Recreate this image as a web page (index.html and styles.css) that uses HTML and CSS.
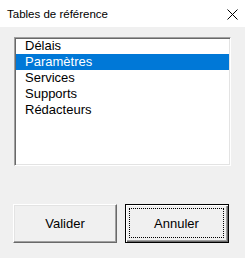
FILE: index.html
```html
<!DOCTYPE html>
<html lang="fr">
<head>
    <meta charset="UTF-8">
    <title>Tables de référence</title>
    <link rel="stylesheet" href="styles.css">
</head>
<body>
    <div class="titlebar">
        <span class="title">Tables de référence</span>
        <svg class="close" width="11" height="11" viewBox="0 0 11 11">
            <path d="M0.5 0.5 L10.5 10.5 M10.5 0.5 L0.5 10.5" stroke="#000" stroke-width="1" fill="none"/>
        </svg>
    </div>
    <div class="client">
        <ul class="listbox">
            <li>Délais</li>
            <li class="selected">Paramètres</li>
            <li>Services</li>
            <li>Supports</li>
            <li>Rédacteurs</li>
        </ul>
        <div class="buttons">
            <button class="btn">Valider</button>
            <button class="btn default"><span class="focus">Annuler</span></button>
        </div>
    </div>
</body>
</html>
```

FILE: styles.css
```css
body {
    margin: 0;
    width: 245px;
    height: 258px;
    background-color: #f0f0f0;
    font-family: "Liberation Sans", Arial, sans-serif;
    overflow: hidden;
}

.titlebar {
    height: 27px;
    background-color: #fff;
    display: flex;
    align-items: center;
    justify-content: space-between;
    padding: 0 7px 0 7px;
}

.title {
    font-size: 11.5px;
    color: #000;
    margin-top: 1px;
}

.close {
    display: block;
    margin-right: 0;
    margin-top: 1px;
}

.client {
    padding: 10px 0 0 14px;
}

.listbox {
    list-style: none;
    margin: 0;
    padding: 0 1px 0 1px;
    width: 213px;
    height: 127px;
    background-color: #fff;
    border: 1px solid;
    border-color: #a0a0a0 #fff #fff #a0a0a0;
    box-shadow: inset 1px 1px 0 #696969, inset -1px -1px 0 #e3e3e3;
    font-size: 13px;
}

.listbox li {
    height: 16px;
    line-height: 16px;
    padding-left: 9px;
    color: #000;
}

.listbox li.selected {
    background-color: #0078d7;
    color: #fff;
}

.buttons {
    display: flex;
    gap: 8px;
    margin: 38px 0 0 -1px;
}

.btn {
    width: 104px;
    height: 39px;
    padding: 0;
    margin: 0;
    font-family: "Liberation Sans", Arial, sans-serif;
    font-size: 13px;
    color: #000;
    background-color: #f0f0f0;
    border: 1px solid;
    border-color: #fff #696969 #696969 #fff;
    box-shadow: inset -1px -1px 0 #a0a0a0, inset 1px 1px 0 #e3e3e3;
    outline: none;
}

.btn.default {
    border: 1px solid #000;
    box-shadow: inset 1px 1px 0 #fff, inset -1px -1px 0 #696969, inset -2px -2px 0 #a0a0a0;
    display: flex;
    padding: 3px 4px 4px 3px;
}

.focus {
    flex: 1;
    display: flex;
    align-items: center;
    justify-content: center;
    border: 1px dotted #000;
}
```
